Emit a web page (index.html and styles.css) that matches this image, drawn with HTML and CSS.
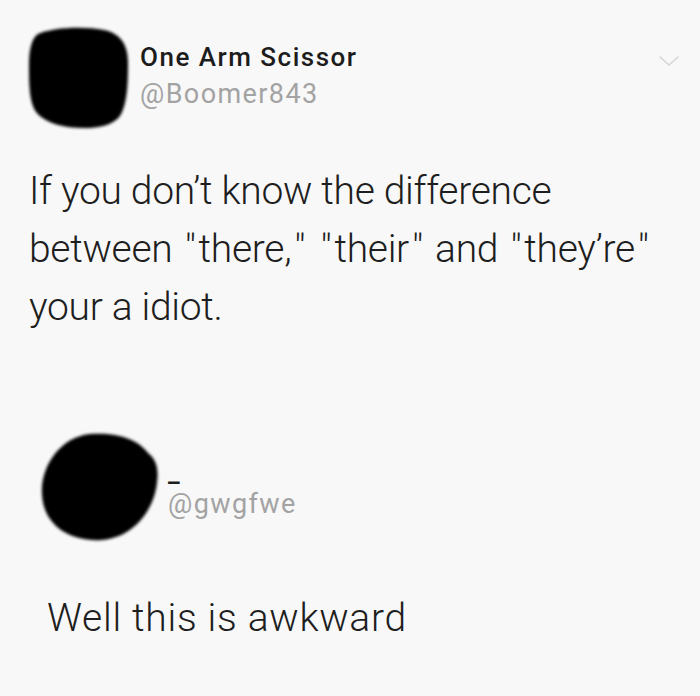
FILE: index.html
```html
<!DOCTYPE html>
<html lang="en">
  <head>
    <meta charset="UTF-8" />
    <meta name="viewport" content="width=device-width, initial-scale=1.0" />
    <title>One Arm Scissor on Twitter</title>
    <link rel="stylesheet" href="styles.css">
  </head>
  <body>
    <div class="tweet">
      <div class="tweet-head">
        <svg class="avatar" width="110" height="110" viewBox="0 0 110 110">
          <defs>
            <filter id="soft" x="-10%" y="-10%" width="120%" height="120%">
              <feGaussianBlur stdDeviation="1.4" />
            </filter>
          </defs>
          <path
            filter="url(#soft)"
            fill="#050505"
            d="M14 10 C30 3 60 2 80 6 C98 10 104 22 104 40 C104 62 103 80 96 92 C88 102 74 104 60 104 C40 104 22 100 12 88 C5 78 5 60 5 40 C5 25 8 14 14 10 Z"
          />
        </svg>
        <div class="names">
          <div class="name">One Arm Scissor</div>
          <div class="handle">@Boomer843</div>
        </div>
        <svg class="chevron" width="22" height="14" viewBox="0 0 22 14">
          <path d="M2 3 L11 11 L20 3" fill="none" stroke="#d6d6d6" stroke-width="1.6" stroke-linecap="round" stroke-linejoin="round" />
        </svg>
      </div>
      <p class="tweet-text">
        If you don’t know the difference<br />
        between <span class="q">″</span>there,<span class="q">″</span> <span class="q">″</span>their<span class="q">″</span> and <span class="q">″</span>they’re<span class="q">″</span><br />
        your a idiot.
      </p>
    </div>

    <div class="reply">
      <div class="reply-head">
        <svg class="avatar" width="128" height="120" viewBox="0 0 128 120">
          <defs>
            <filter id="soft2" x="-10%" y="-10%" width="120%" height="120%">
              <feGaussianBlur stdDeviation="1.6" />
            </filter>
          </defs>
          <path
            filter="url(#soft2)"
            fill="#050505"
            d="M54 7 C80 5 102 12 112 26 C120 32 123 42 121 55 C119 80 100 110 66 113 C36 115 8 100 6 68 C4 40 24 10 54 7 Z"
          />
        </svg>
        <div class="names">
          <div class="name">_</div>
          <div class="handle">@gwgfwe</div>
        </div>
      </div>
      <p class="reply-text">Well this is awkward</p>
    </div>
  </body>
</html>
```

FILE: styles.css
```css
body {
  margin: 0;
  background-color: #f8f8f8;
  color: #1e1e1e;
  font-family: Roboto, "Liberation Sans", sans-serif;
  height: 696px;
  overflow: hidden;
}

.tweet {
  padding: 24px 20px 0 24px;
}

.tweet-head {
  display: flex;
  align-items: flex-start;
}

.avatar {
  flex-shrink: 0;
}

.names {
  display: flex;
  flex-direction: column;
  gap: 8px;
}

.tweet-head .names {
  margin-left: 6px;
  padding-top: 19px;
}

.name {
  font-size: 26px;
  line-height: 28px;
  font-weight: 500;
  letter-spacing: 1.5px;
  color: #1c1c1c;
}

.handle {
  font-size: 27px;
  line-height: 30px;
  letter-spacing: 1.4px;
  color: #a3a3a3;
}

.chevron {
  margin-left: auto;
  margin-top: 30px;
}

.tweet-text {
  margin: 28px 0 0 5px;
  font-size: 39px;
  font-weight: 300;
  line-height: 58px;
  letter-spacing: -0.3px;
  color: #1e1e1e;
}

.q {
  margin: 0 3px;
}

.reply {
  padding: 0 0 0 36px;
  margin-top: 91px;
}

.reply-head {
  display: flex;
  align-items: flex-start;
}

.reply-head .names {
  margin-left: 4px;
  padding-top: 39px;
  gap: 9px;
}

.reply-head .name {
  line-height: 14px;
}

.reply-text {
  margin: 51px 0 0 11px;
  font-size: 39px;
  font-weight: 300;
  line-height: 40px;
  letter-spacing: 0.7px;
  color: #1e1e1e;
}
```
